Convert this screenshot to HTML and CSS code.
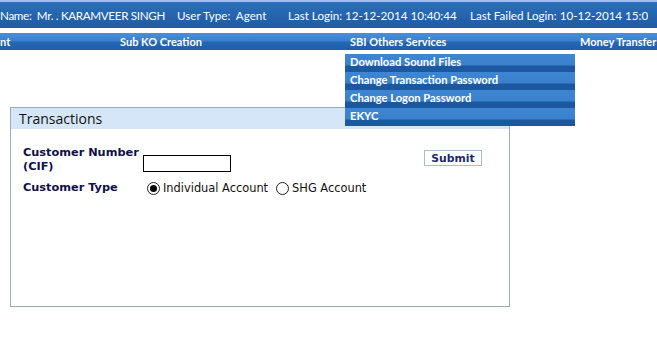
FILE: index.html
```html
<!DOCTYPE html>
<html>
<head>
<meta charset="utf-8">
<link rel="stylesheet" href="styles.css">
</head>
<body>
<div class="topbar">
  <span class="info i1">Name:&nbsp; Mr. . KARAMVEER SINGH</span>
  <span class="info i2">User Type:&nbsp; Agent</span>
  <span class="info i3">Last Login: 12-12-2014 10:40:44</span>
  <span class="info i4">Last Failed Login: 10-12-2014 15:0</span>
</div>
<div class="menubar">
  <div class="menu m1">nt</div>
  <div class="menu m2">Sub KO Creation</div>
  <div class="menu m3">SBI Others Services
    <ul class="dropdown">
      <li>Download Sound Files</li>
      <li>Change Transaction Password</li>
      <li>Change Logon Password</li>
      <li>EKYC</li>
    </ul>
  </div>
  <div class="menu m4">Money Transfer</div>
</div>
<div class="panel">
  <div class="panel-head">Transactions</div>
  <div class="panel-body">
    <div class="row row-cif">
      <div class="label">Customer Number<br>(CIF)</div>
      <div class="field"><input type="text" class="textbox"></div>
      <button class="submit">Submit</button>
    </div>
    <div class="row row-type">
      <div class="label">Customer Type</div>
      <div class="radios">
        <span class="radio checked"></span><span class="rlabel">Individual Account</span>
        <span class="radio"></span><span class="rlabel">SHG Account</span>
      </div>
    </div>
  </div>
</div>
</body>
</html>
```

FILE: styles.css
```css
html, body {
  margin: 0;
  padding: 0;
  background: #fff;
}
body {
  width: 657px;
  height: 340px;
  overflow: hidden;
}
.topbar {
  height: 28px;
  box-sizing: border-box;
  border-top: 2px solid #9fc0e8;
  background: linear-gradient(#2c6fba, #1f5ba3);
  display: flex;
  align-items: center;
  white-space: nowrap;
  overflow: hidden;
  color: #fff;
  font-family: Lato, "Liberation Sans", sans-serif;
  font-size: 11.6px;
  padding-top: 1px;
}
.info {
  flex: none;
  overflow: hidden;
}
.i1 { width: 177px; letter-spacing: -0.3px; }
.i2 { width: 111px; }
.i3 { width: 182px; }
.menubar {
  margin-top: 5px;
  height: 17px;
  background: linear-gradient(#4a8fd8 0%, #3a80cd 45%, #2467b5 55%, #1f5da8 100%);
  display: flex;
  align-items: center;
  white-space: nowrap;
  color: #fff;
  font-family: Lato, "Liberation Sans", sans-serif;
  font-weight: bold;
  font-size: 11px;
  position: relative;
}
.menu {
  flex: none;
  position: relative;
}
.m1 { width: 120px; }
.m2 { width: 230px; }
.m3 { width: 230px; }
.dropdown {
  position: absolute;
  left: -5px;
  top: 19px;
  margin: 0;
  padding: 0;
  list-style: none;
  width: 230px;
  z-index: 5;
  font-size: 11.2px;
}
.dropdown li {
  height: 18px;
  line-height: 16px;
  padding-left: 5px;
  background: linear-gradient(#3f86d2 0%, #3a80cd 60%, #1c58a0 68%, #1c58a0 100%);
  color: #fff;
}
.panel {
  margin: 57px 0 0 10px;
  width: 500px;
  height: 200px;
  box-sizing: border-box;
  border: 1px solid #9aabb8;
}
.panel-head {
  height: 21px;
  background: #d4e6f8;
  font-family: "Open Sans", "Noto Sans", sans-serif;
  font-size: 14px;
  line-height: 21px;
  padding-left: 8px;
  color: #111;
}
.panel-body {
  padding: 17px 0 0 12px;
  font-family: "DejaVu Sans", Verdana, sans-serif;
  font-size: 11.4px;
  color: #111;
}
.row {
  display: flex;
  align-items: flex-start;
}
.label {
  font-weight: bold;
  color: #10104a;
  width: 120px;
  line-height: 14px;
  font-size: 11.3px;
}
.field {
  padding-top: 9px;
}
.textbox {
  width: 88px;
  height: 17px;
  box-sizing: border-box;
  border: 1px solid #000;
  margin: 0;
  padding: 0;
  display: block;
}
.submit {
  margin: 4px 0 0 193px;
  width: 58px;
  height: 16px;
  padding: 0;
  background: #fff;
  border: 1px solid #a9bed0;
  font-family: "DejaVu Sans", Verdana, sans-serif;
  font-weight: bold;
  font-size: 10.8px;
  color: #1a2a6a;
}
.row-type {
  margin-top: 7px;
  align-items: center;
}
.radios {
  display: flex;
  align-items: center;
  margin-left: 4px;
}
.radio {
  width: 13px;
  height: 13px;
  border: 1px solid #222;
  border-radius: 50%;
  box-sizing: border-box;
  position: relative;
  margin-right: 3px;
}
.radio.checked::after {
  content: "";
  position: absolute;
  left: 2px;
  top: 2px;
  width: 7px;
  height: 7px;
  border-radius: 50%;
  background: #000;
}
.rlabel {
  margin-right: 8px;
}
```
